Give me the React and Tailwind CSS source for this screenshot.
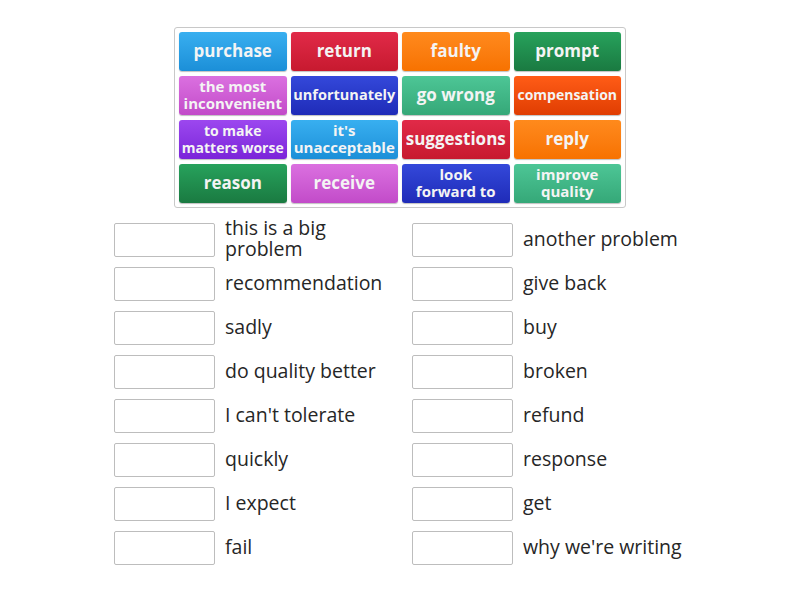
import React from "react";

const tiles = [
  { lines: ["purchase"], color: "blue", size: "text-[17px]" },
  { lines: ["return"], color: "red", size: "text-[17px]" },
  { lines: ["faulty"], color: "orange", size: "text-[17px]" },
  { lines: ["prompt"], color: "green", size: "text-[17px]" },
  { lines: ["the most", "inconvenient"], color: "orchid", size: "text-[15px]" },
  { lines: ["unfortunately"], color: "navy", size: "text-[14.5px]" },
  { lines: ["go wrong"], color: "teal", size: "text-[17px]" },
  { lines: ["compensation"], color: "redorange", size: "text-[14px]" },
  { lines: ["to make", "matters worse"], color: "purple", size: "text-[14px]" },
  { lines: ["it's", "unacceptable"], color: "blue", size: "text-[15px]" },
  { lines: ["suggestions"], color: "red", size: "text-[17px]" },
  { lines: ["reply"], color: "orange", size: "text-[17px]" },
  { lines: ["reason"], color: "green", size: "text-[17px]" },
  { lines: ["receive"], color: "orchid", size: "text-[17px]" },
  { lines: ["look", "forward to"], color: "navy", size: "text-[15px]" },
  { lines: ["improve", "quality"], color: "teal", size: "text-[15px]" },
];

const colors = {
  blue: "from-[#38aff0] to-[#1b8fd8]",
  red: "from-[#e12a48] to-[#c7192f]",
  orange: "from-[#ff8a1c] to-[#f77200]",
  green: "from-[#27a25c] to-[#1a7a41]",
  orchid: "from-[#db70e0] to-[#c24bc9]",
  navy: "from-[#3448da] to-[#1f2bb8]",
  teal: "from-[#4dc696] to-[#35a878]",
  redorange: "from-[#ff5c16] to-[#e03d02]",
  purple: "from-[#9c47ef] to-[#7b23d9]",
};

const left = [
  "this is a big problem",
  "recommendation",
  "sadly",
  "do quality better",
  "I can't tolerate",
  "quickly",
  "I expect",
  "fail",
];

const right = [
  "another problem",
  "give back",
  "buy",
  "broken",
  "refund",
  "response",
  "get",
  "why we're writing",
];

function Slot({ label }) {
  return (
    <div className="flex h-[44px] items-center">
      <div className="h-[34px] w-[101px] shrink-0 rounded-[2px] border border-[#bdbdbd] bg-white" />
      <div className="mb-[4px] ml-[10px] w-[162px] text-[19.5px] leading-[21px] text-[#262626]">{label}</div>
    </div>
  );
}

export default function App() {
  return (
    <div className="min-h-[600px] w-[800px] bg-white" style={{ fontFamily: '"Open Sans", sans-serif' }}>
      <div className="ml-[174px] mt-[27px] w-[452px] rounded-[3px] border border-[#c8c8c8] p-[4px]">
        <div className="grid grid-cols-4 gap-x-[4px] gap-y-[5px]">
          {tiles.map((t, i) => (
            <div
              key={i}
              className={`flex h-[39px] flex-col items-center justify-center rounded-[3px] bg-gradient-to-b pb-[2px] text-center font-bold leading-[17px] text-[#f4f4f4] shadow-[0_1px_1px_rgba(0,0,0,0.25)] ${colors[t.color]} ${t.size}`}
            >
              {t.lines.map((l) => (
                <span key={l} className="whitespace-nowrap">{l}</span>
              ))}
            </div>
          ))}
        </div>
      </div>

      <div className="mt-[10px] flex">
        <div className="ml-[114px] w-[298px]">
          {left.map((l) => (
            <Slot key={l} label={l} />
          ))}
        </div>
        <div>
          {right.map((r) => (
            <Slot key={r} label={r} />
          ))}
        </div>
      </div>
    </div>
  );
}
